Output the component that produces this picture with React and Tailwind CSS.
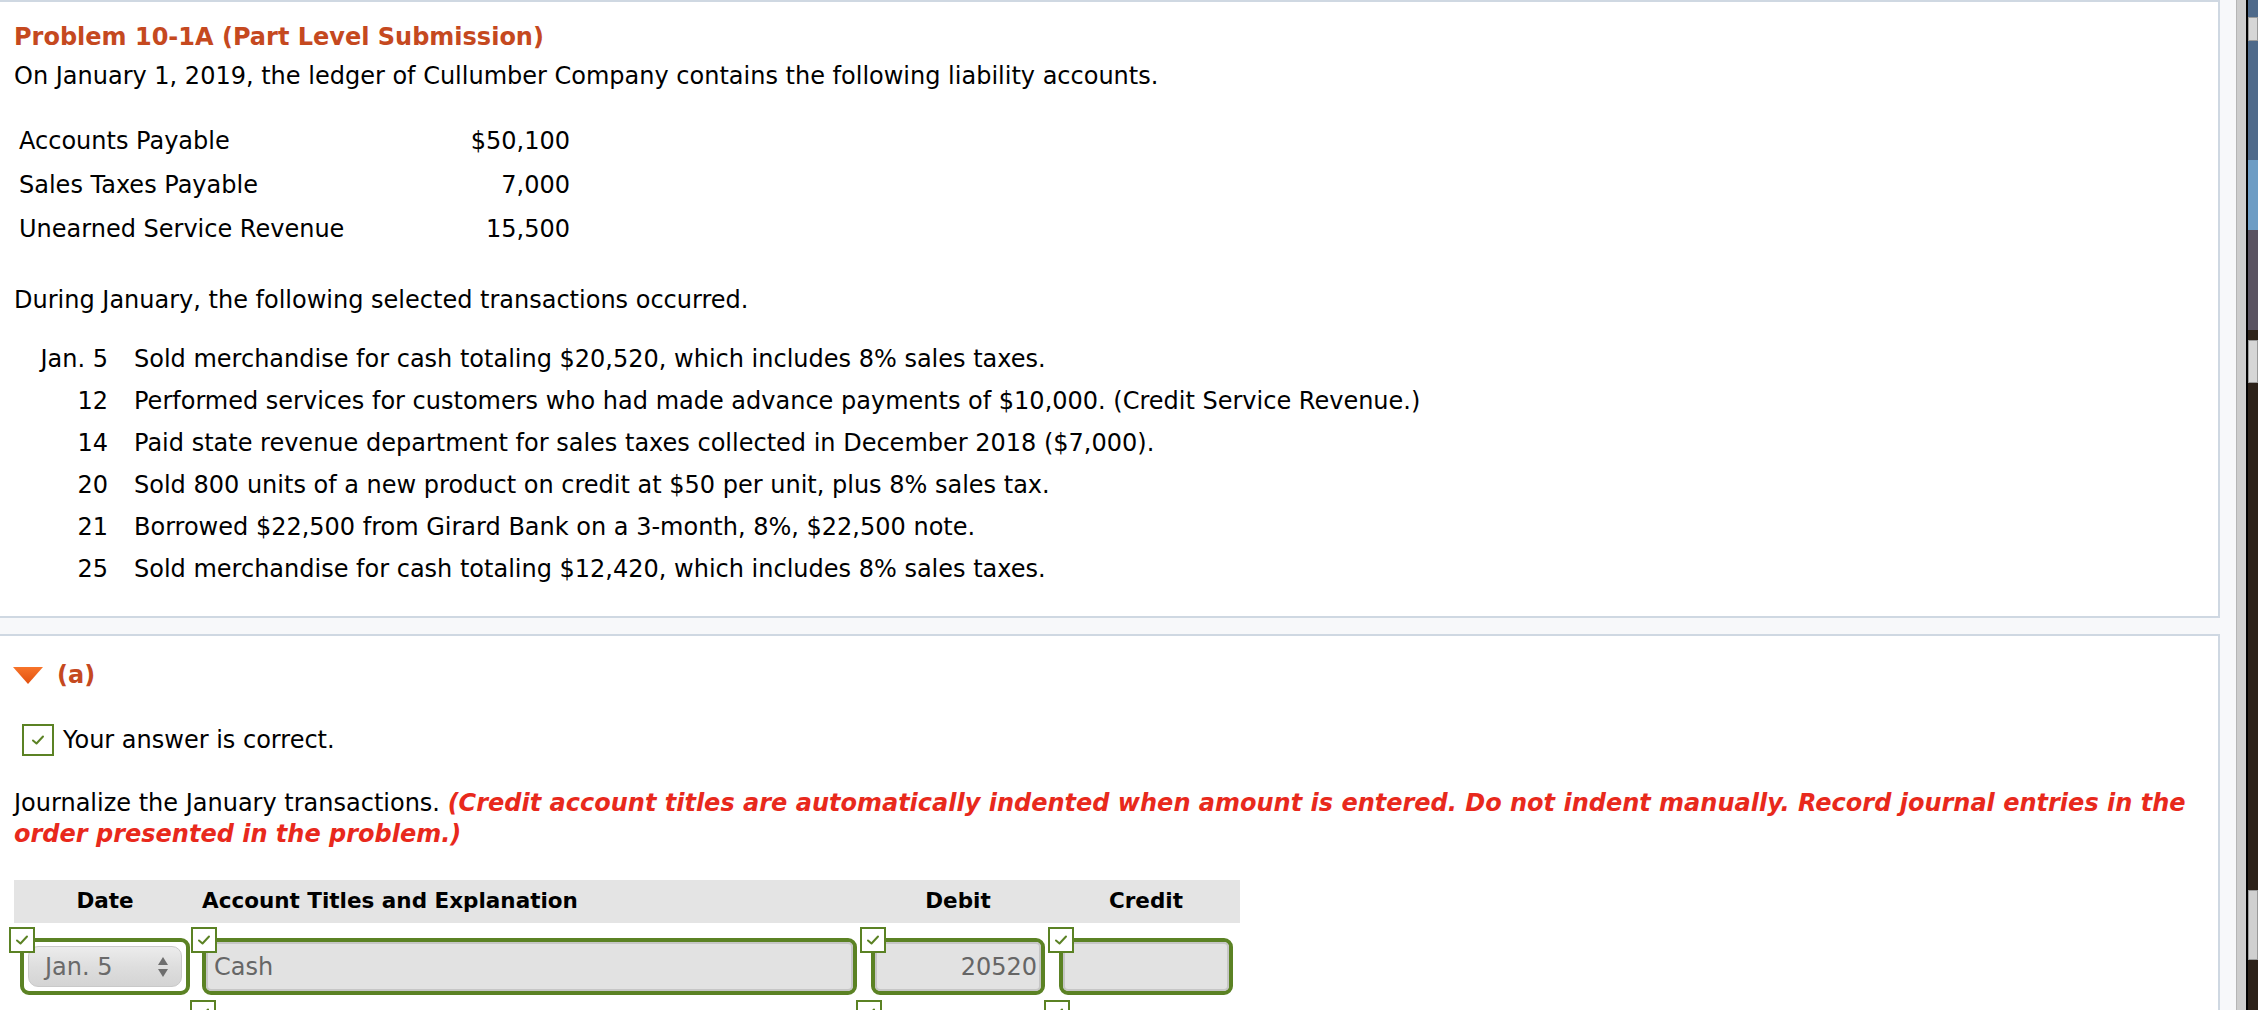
import React from "react";

const ledger = [
  { name: "Accounts Payable", amount: "$50,100" },
  { name: "Sales Taxes Payable", amount: "7,000" },
  { name: "Unearned Service Revenue", amount: "15,500" },
];

const transactions = [
  { day: "Jan. 5", text: "Sold merchandise for cash totaling $20,520, which includes 8% sales taxes." },
  { day: "12", text: "Performed services for customers who had made advance payments of $10,000. (Credit Service Revenue.)" },
  { day: "14", text: "Paid state revenue department for sales taxes collected in December 2018 ($7,000)." },
  { day: "20", text: "Sold 800 units of a new product on credit at $50 per unit, plus 8% sales tax." },
  { day: "21", text: "Borrowed $22,500 from Girard Bank on a 3-month, 8%, $22,500 note." },
  { day: "25", text: "Sold merchandise for cash totaling $12,420, which includes 8% sales taxes." },
];

function Check({ size = 26 }) {
  return (
    <span
      className="flex items-center justify-center bg-white border-2 border-[#5b8224]"
      style={{ width: size, height: size }}
    >
      <svg width="14" height="12" viewBox="0 0 14 12" fill="none">
        <path d="M2 6.5 L5.5 9.5 L12 2.5" stroke="#5b8224" strokeWidth="2" strokeLinecap="round" strokeLinejoin="round" />
      </svg>
    </span>
  );
}

function CornerCheck() {
  return (
    <span className="absolute -left-[15px] -top-[15px] z-10">
      <Check />
    </span>
  );
}

function Field({ children, className = "" }) {
  return (
    <div className={"relative h-[57px] rounded-[9px] border-4 border-[#5b8224] " + className}>
      <CornerCheck />
      {children}
    </div>
  );
}

export default function App() {
  return (
    <div className="flex h-[1010px] w-[2258px] overflow-hidden bg-[#f7f8fa] font-['DejaVu_Sans',Verdana,sans-serif] text-[24px] text-black">
      <div className="w-[2220px] shrink-0">
        {/* problem statement */}
        <div className="border-t-2 border-r-2 border-b-2 border-[#cfd8e2] bg-white pl-[14px] pt-[20px] pb-[26px]">
          <h1 className="h-[30px] leading-[30px] font-bold text-[#c5491f]">Problem 10-1A (Part Level Submission)</h1>
          <p className="mt-[9px] h-[30px] leading-[30px]">
            On January 1, 2019, the ledger of Cullumber Company contains the following liability accounts.
          </p>

          <div className="mt-[28px] w-[556px] pl-[5px]">
            {ledger.map((row) => (
              <div key={row.name} className="flex h-[44px] items-center justify-between">
                <span>{row.name}</span>
                <span>{row.amount}</span>
              </div>
            ))}
          </div>

          <p className="mt-[34px] h-[30px] leading-[30px]">During January, the following selected transactions occurred.</p>

          <div className="mt-[23px]">
            {transactions.map((t) => (
              <div key={t.day} className="flex h-[42px] items-center">
                <span className="w-[94px] text-right">{t.day}</span>
                <span className="ml-[26px]">{t.text}</span>
              </div>
            ))}
          </div>
        </div>

        {/* part (a) */}
        <div className="mt-[16px] h-[400px] border-t-2 border-r-2 border-[#cfd8e2] bg-white pl-[14px]">
          <div className="mt-[24px] flex h-[30px] items-center">
            <svg width="30" height="17" viewBox="0 0 30 17" className="ml-[-1px]">
              <defs>
                <linearGradient id="tri" x1="0" y1="0" x2="0" y2="1">
                  <stop offset="0" stopColor="#f7742a" />
                  <stop offset="1" stopColor="#e2500f" />
                </linearGradient>
              </defs>
              <path d="M0 0 H30 L15 17 Z" fill="url(#tri)" />
            </svg>
            <span className="ml-[14px] font-bold text-[#c5491f]">(a)</span>
          </div>

          <div className="mt-[34px] flex h-[32px] items-center pl-[8px]">
            <Check size={32} />
            <span className="ml-[9px]">Your answer is correct.</span>
          </div>

          <p className="mt-[32px] leading-[31px]">
            Journalize the January transactions.{" "}
            <span className="font-bold italic text-[#e8291c]">
              (Credit account titles are automatically indented when amount is entered. Do not indent manually. Record journal entries in the
              <br />
              order presented in the problem.)
            </span>
          </p>

          <div className="mt-[30px] w-[1226px]">
            <div className="grid h-[43px] grid-cols-[182px_668px_188px_188px] items-center bg-[#e4e4e4] text-[21.5px] font-bold">
              <span className="text-center">Date</span>
              <span className="pl-[6px]">Account Titles and Explanation</span>
              <span className="text-center">Debit</span>
              <span className="text-center">Credit</span>
            </div>

            <div className="mt-[15px] grid grid-cols-[182px_668px_188px_188px]">
              <div className="pl-[6px]">
                <Field className="w-[170px] bg-white p-[4px]">
                  <div className="flex h-full items-center justify-between rounded-[10px] border border-[#c9c9c9] bg-gradient-to-b from-[#ececec] via-[#dedede] to-[#d4d4d4] pl-[16px] pr-[12px] text-[#6a6a6a]">
                    <span>Jan. 5</span>
                    <svg width="12" height="22" viewBox="0 0 12 22">
                      <path d="M6 1 L11 9 H1 Z" fill="#6e6e6e" />
                      <path d="M6 21 L11 13 H1 Z" fill="#6e6e6e" />
                    </svg>
                  </div>
                </Field>
              </div>
              <div className="pl-[6px]">
                <Field className="w-[655px] bg-[#e2e2e2]">
                  <div className="flex h-full items-center rounded-[5px] border-2 border-[#c6c6c6] pl-[6px] text-[#666]">Cash</div>
                </Field>
              </div>
              <div className="pl-[7px]">
                <Field className="w-[174px] bg-[#e2e2e2]">
                  <div className="flex h-full items-center justify-end rounded-[5px] border-2 border-[#c6c6c6] pr-[2px] text-[#666]">20520</div>
                </Field>
              </div>
              <div className="pl-[7px]">
                <Field className="w-[174px] bg-[#e2e2e2]">
                  <div className="h-full rounded-[5px] border-2 border-[#c6c6c6]" />
                </Field>
              </div>
            </div>

            <div className="relative mt-[5px] h-[20px]">
              <span className="absolute left-[176px] top-0"><Check /></span>
              <span className="absolute left-[842px] top-0"><Check /></span>
              <span className="absolute left-[1030px] top-0"><Check /></span>
            </div>
          </div>
        </div>
      </div>

      {/* window edge and desktop */}
      <div className="w-[16px] shrink-0 bg-[#f7f8fa]" />
      <div className="w-[10px] shrink-0 border-l border-[#b5b5b5] bg-[#cdcdcd]" />
      <div className="w-[2px] shrink-0 bg-black" />
      <div className="flex w-[10px] shrink-0 flex-col">
        <div className="h-[17px] bg-[#4f6a8a]" />
        <div className="h-[24px] border border-[#9a9a9a] bg-[#d6d6d6]" />
        <div className="h-[119px] bg-[#4f6a8a]" />
        <div className="h-[70px] bg-[#6d9cc4]" />
        <div className="h-[100px] bg-[#5a5361]" />
        <div className="h-[10px] bg-[#2f241b]" />
        <div className="h-[43px] border border-[#9a9a9a] bg-[#d6d6d6]" />
        <div className="h-[507px] bg-[#2c2119]" />
        <div className="h-[70px] border border-[#9a9a9a] bg-[#d0d0d0]" />
        <div className="flex-1 bg-[#2c2119]" />
      </div>
    </div>
  );
}
